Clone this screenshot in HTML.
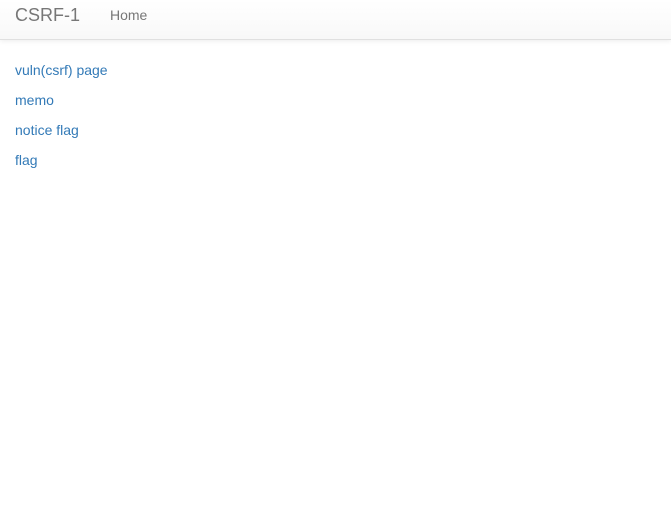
<!DOCTYPE html>
<html><head><meta charset="utf-8"><style>
*{box-sizing:border-box}
body{margin:0;font-family:"Liberation Sans",sans-serif;font-size:14px;background:#fff;width:671px;height:528px;overflow:hidden}
.nav{position:absolute;top:0;left:0;width:671px;height:40px;background:linear-gradient(#fff,#f8f8f8);border-bottom:1px solid #e0e0e0;box-shadow:0 1px 5px rgba(0,0,0,.08)}
.brand{position:absolute;left:15px;top:5px;font-size:18px;color:#777;line-height:20px}
.home{position:absolute;left:110px;top:7px;color:#777;line-height:16px}
.links{position:absolute;left:15px;top:60px}
.links a{display:block;color:#337ab7;text-decoration:none;line-height:20px;height:30px}
</style></head><body>
<div class="nav"><span class="brand">CSRF-1</span><span class="home">Home</span></div>
<div class="links"><a>vuln(csrf) page</a><a>memo</a><a>notice flag</a><a>flag</a></div>
</body></html>
